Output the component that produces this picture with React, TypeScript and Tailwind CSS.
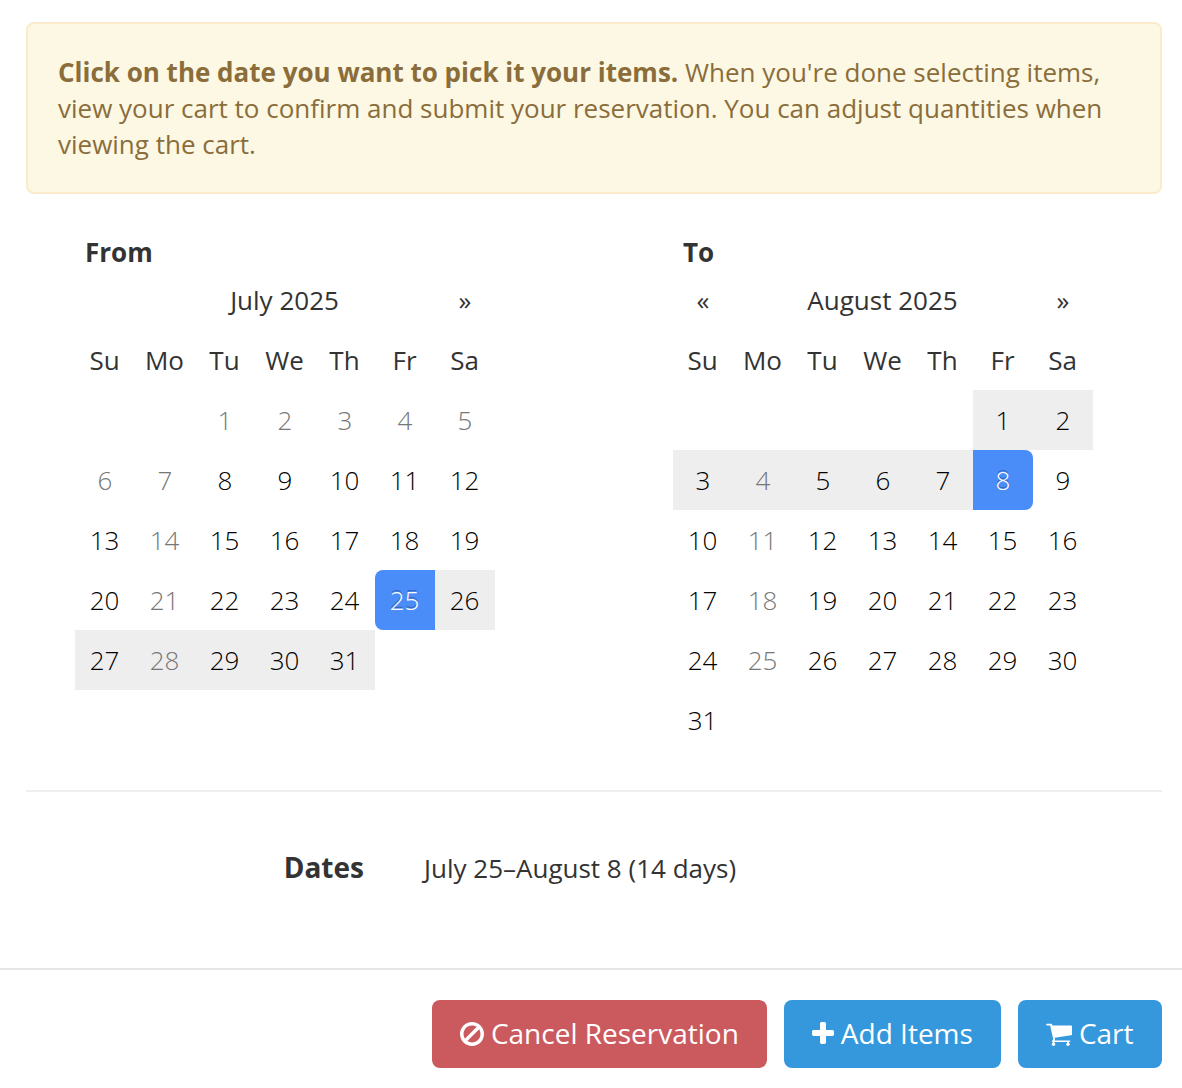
import { clsx } from "clsx";
import type { ReactNode } from "react";

const WEEKDAYS = ["Su", "Mo", "Tu", "We", "Th", "Fr", "Sa"];

interface CalendarProps {
	label: string;
	title: string;
	offset: number;
	disabled: number[];
	range: [number, number];
	start?: number;
	end?: number;
	hasPrev?: boolean;
}

function Calendar({
	label,
	title,
	offset,
	disabled,
	range,
	start,
	end,
	hasPrev,
}: CalendarProps) {
	const days = Array.from({ length: 31 }, (_, i) => i + 1);

	return (
		<div className="w-[420px]">
			<div className="px-[10px] font-bold">{label}</div>
			<div className="grid grid-cols-7 leading-[60px] text-center">
				<button type="button">{hasPrev && "«"}</button>
				<div className="col-span-5 pr-px">{title}</div>
				<button type="button">»</button>
				{WEEKDAYS.map((day) => (
					<div key={day} className="pr-px">
						{day}
					</div>
				))}
				{/* Blank cells before the 1st */}
				{Array.from({ length: offset }, (_, i) => (
					<div key={`blank-${i}`} />
				))}
				{days.map((day) => {
					const selected = day === start || day === end;
					const inRange = day >= range[0] && day <= range[1];

					return (
						<div
							key={day}
							className={clsx(
								"h-[60px] font-light",
								day > 9 && "pr-px",
								selected &&
									"bg-[#4b8df8] text-white [text-shadow:0_-2px_0_rgba(0,0,0,0.25)]",
								!selected && inRange && "bg-[#eee]",
								!selected &&
									(disabled.includes(day) ? "text-[#777]" : "text-black"),
								day === start && "rounded-l-lg",
								day === end && "rounded-r-lg",
							)}
						>
							{day}
						</div>
					);
				})}
			</div>
		</div>
	);
}

function BanIcon() {
	return (
		<svg viewBox="128 0 1536 1792" className="w-6 h-7" fill="currentColor">
			<path d="M1440 893q0-161-87-295l-754 753q137 89 297 89 111 0 211.5-43.5t173.5-116.5 116-174.5 43-212.5zm-999 299l755-754q-135-91-300-91-148 0-273 73t-198 199-73 274q0 162 89 299zm1223-299q0 157-61 300t-163.5 246-245 164-298.5 61-298.5-61-245-164-163.5-246-61-300 61-299.5 163.5-245.5 245-164 298.5-61 298.5 61 245 164 163.5 245.5 61 299.5z" />
		</svg>
	);
}

function PlusIcon() {
	return (
		<svg viewBox="192 0 1408 1792" className="w-[22px] h-7" fill="currentColor">
			<path d="M1600 736v192q0 40-28 68t-68 28h-416v416q0 40-28 68t-68 28h-192q-40 0-68-28t-28-68v-416h-416q-40 0-68-28t-28-68v-192q0-40 28-68t68-28h416v-416q0-40 28-68t68-28h192q40 0 68 28t28 68v416h416q40 0 68 28t28 68z" />
		</svg>
	);
}

function CartIcon() {
	return (
		<svg viewBox="0 0 26 28" className="w-[26px] h-7" fill="currentColor">
			<path d="M1 3.8H5.2Q5.9 3.8 6.1 4.5L6.5 5.6H25.2Q26 5.6 26 6.4V14.3Q26 15.1 25.2 15.2L8.6 17.7L9 19.3Q9.1 20 8.7 20.4H23.6Q24.3 20.4 24.3 21.2T23.6 22H6.6Q5.6 22 6.1 21L7.2 19.2L4.2 5.5H1Q0.2 5.5 0.2 4.65T1 3.8Z" />
			<path d="M6.7 21.8H8.3V24H6.7ZM21.2 21.8H22.8V24H21.2Z" />
			<circle cx="7.5" cy="24.3" r="1.7" />
			<circle cx="22" cy="24.3" r="1.7" />
		</svg>
	);
}

function ActionButton({
	icon,
	danger,
	children,
}: {
	icon: ReactNode;
	danger?: boolean;
	children: ReactNode;
}) {
	return (
		<button
			type="button"
			className={clsx(
				"flex items-center gap-[6.5px] h-[68px] pl-7 pr-[28.5px] rounded-lg text-[28px] text-white whitespace-nowrap",
				danger ? "bg-[#cb5a5e]" : "bg-[#3598dc]",
			)}
		>
			{icon}
			<span className="pb-0.5">{children}</span>
		</button>
	);
}

export default function App() {
	return (
		<div className="h-[1088px] bg-white text-[#333] text-[26px] leading-9 font-['Open_Sans',sans-serif]">
			<div className="h-[968px] pl-[26px] pr-5 pt-[22px]">
				<div className="p-[30px] border-2 border-[#faebcc] rounded-lg bg-[#fcf8e3] text-[#8a6d3b]">
					<strong>Click on the date you want to pick it your items.</strong> When
					you're done selecting items, view your cart to confirm and submit your
					reservation. You can adjust quantities when viewing the cart.
				</div>

				<div className="flex gap-[178px] h-[598px] pl-[49px] pt-10 border-b-2 border-[#eee]">
					<Calendar
						label="From"
						title="July 2025"
						offset={2}
						disabled={[1, 2, 3, 4, 5, 6, 7, 14, 21, 28]}
						range={[25, 31]}
						start={25}
					/>
					<Calendar
						label="To"
						title="August 2025"
						offset={5}
						disabled={[4, 11, 18, 25]}
						range={[1, 8]}
						end={8}
						hasPrev
					/>
				</div>

				<div className="flex items-baseline pt-[57px]">
					<div className="w-[338px] text-right text-[28px] font-bold">Dates</div>
					<div className="pl-[60px]">July 25–August 8 (14 days)</div>
				</div>
			</div>

			<div className="flex justify-end gap-[17px] h-[120px] pt-[30px] pr-5 border-t-2 border-[#e5e5e5]">
				<ActionButton icon={<BanIcon />} danger>
					Cancel Reservation
				</ActionButton>
				<ActionButton icon={<PlusIcon />}>Add Items</ActionButton>
				<ActionButton icon={<CartIcon />}>Cart</ActionButton>
			</div>
		</div>
	);
}
